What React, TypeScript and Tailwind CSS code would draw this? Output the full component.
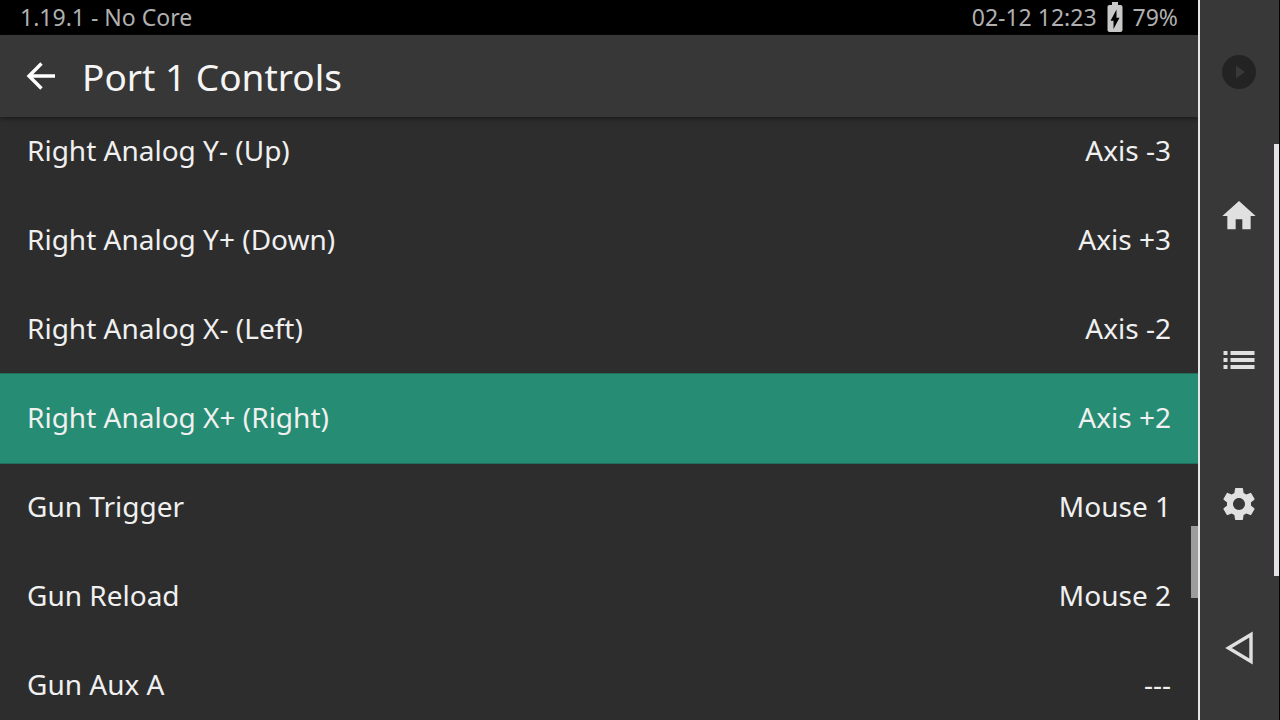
import { MdBatteryChargingFull, MdHome, MdSettings } from "react-icons/md";
import clsx from "clsx";

type Binding = {
  label: string;
  value: string;
  selected?: boolean;
};

const bindings: Binding[] = [
  { label: "Right Analog Y- (Up)", value: "Axis -3" },
  { label: "Right Analog Y+ (Down)", value: "Axis +3" },
  { label: "Right Analog X- (Left)", value: "Axis -2" },
  { label: "Right Analog X+ (Right)", value: "Axis +2", selected: true },
  { label: "Gun Trigger", value: "Mouse 1" },
  { label: "Gun Reload", value: "Mouse 2" },
  { label: "Gun Aux A", value: "---" },
];

function StatusBar() {
  return (
    <div className="flex h-[35px] shrink-0 items-center justify-between bg-black px-5 pb-0.5 text-[23px] leading-9 text-[#b0b0b0]">
      <span>1.19.1 - No Core</span>
      <div className="flex items-center">
        <span>02-12 12:23</span>
        <MdBatteryChargingFull className="size-9 text-[#c8c8c8]" />
        <span>79%</span>
      </div>
    </div>
  );
}

function TitleBar() {
  return (
    <header className="z-10 flex h-[82px] shrink-0 items-center gap-6 bg-[#373737] px-6 shadow-[0_2px_4px_#1c1c1c]">
      <button type="button" aria-label="Back" className="text-white">
        <svg viewBox="0 0 34 34" className="size-[34px]" fill="none" stroke="currentColor" strokeWidth="3.4">
          <path d="M31 17H6M17.5 4.5 5 17l12.5 12.5" />
        </svg>
      </button>
      <h1 className="text-[37px] leading-none text-[#f5f5f5]">Port 1 Controls</h1>
    </header>
  );
}

function BindingList() {
  return (
    <main className="relative min-h-0 flex-1 overflow-hidden">
      <ul className="-mt-2.5">
        {bindings.map((binding) => (
          <li key={binding.label}>
            <button
              type="button"
              className={clsx(
                "flex h-[89px] w-full items-center justify-between px-[27px] pb-1 text-[28px] text-[#f0f0f0]",
                binding.selected && "bg-[#268c73] outline-1 outline-[#1f6f5c]",
              )}
            >
              <span>{binding.label}</span>
              <span>{binding.value}</span>
            </button>
          </li>
        ))}
      </ul>
      <div className="absolute right-0 bottom-[122px] h-[12%] w-[7px] bg-[#9d9d9d]" />
    </main>
  );
}

function SideBar() {
  const item = "flex flex-1 items-center justify-center disabled:text-[#232323]";

  return (
    <nav className="relative z-20 flex w-[82px] shrink-0 flex-col border-r border-l-2 border-r-black border-l-[#e6e6e6] bg-[#383838] pr-0.5 text-[#e0e0e0]">
      <button type="button" aria-label="Play" disabled className={item}>
        <svg viewBox="0 0 40 40" className="size-10">
          <circle cx="20" cy="20" r="17" fill="currentColor" />
          <path d="M17 13.5v13l9-6.5z" fill="#383838" />
        </svg>
      </button>
      <button type="button" aria-label="Home" className={item}>
        <MdHome className="size-10" />
      </button>
      <button type="button" aria-label="Menu" className={item}>
        <svg viewBox="0 0 40 40" className="size-10" fill="currentColor">
          <path d="M4.5 11h4v4h-4zM11.5 11h24v4h-24zM4.5 18h4v4h-4zM11.5 18h24v4h-24zM4.5 25h4v4h-4zM11.5 25h24v4h-24z" />
        </svg>
      </button>
      <button type="button" aria-label="Settings" className={item}>
        <MdSettings className="size-10" />
      </button>
      <button type="button" aria-label="Back" className={item}>
        <svg viewBox="0 0 40 40" className="size-10" fill="none" stroke="currentColor" strokeWidth="3.4">
          <path d="M32 6.5v27L9.5 20z" />
        </svg>
      </button>
      <div className="absolute top-1/5 right-0 h-3/5 w-[5px] bg-[#e4e2e4]" />
    </nav>
  );
}

export default function App() {
  return (
    <div className="flex h-screen overflow-hidden bg-[#2d2d2d] font-['Noto_Sans',sans-serif]">
      <div className="flex min-w-0 flex-1 flex-col">
        <StatusBar />
        <TitleBar />
        <BindingList />
      </div>
      <SideBar />
    </div>
  );
}
